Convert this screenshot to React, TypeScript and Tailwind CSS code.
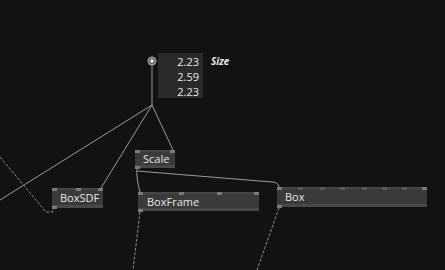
import React from "react";

type Port = { x: number; bright?: boolean };

function Node({
  left,
  top,
  width,
  height,
  label,
  ports,
  bottomPort = true,
  textPad = 8,
}: {
  left: number;
  top: number;
  width: number;
  height: number;
  label: string;
  ports: Port[];
  bottomPort?: boolean;
  textPad?: number;
}) {
  return (
    <div
      className="absolute flex flex-col bg-[#3a3a3a]"
      style={{ left, top, width, height }}
    >
      <div className="h-[2px] bg-[#454545]" />
      <div
        className="flex flex-1 items-center text-[11px] leading-none text-[#e6e6e6] [font-family:'Open_Sans',sans-serif]"
        style={{ paddingLeft: textPad }}
      >
        {label}
      </div>
      <div className="h-[3px] bg-[#484848]" />
      {ports.map((p, i) => (
        <div
          key={i}
          className={
            p.bright
              ? "absolute top-0 h-[3px] w-[5px] bg-[#7a7a7a]"
              : "absolute top-0 h-[3px] w-[5px] bg-[#5a5a5a]"
          }
          style={{ left: p.x }}
        />
      ))}
      {bottomPort && (
        <div className="absolute bottom-[-1px] left-0 h-[3px] w-[5px] bg-[#7a7a7a]" />
      )}
    </div>
  );
}

export default function App() {
  return (
    <div className="relative h-[270px] w-[445px] overflow-hidden bg-[#121212]">
      <svg
        className="absolute left-0 top-0"
        width={445}
        height={270}
        viewBox="0 0 445 270"
      >
        <g stroke="#9a9a9a" strokeWidth={1} fill="none">
          <line x1={152} y1={65} x2={152} y2={105} />
          <line x1={152} y1={105} x2={0} y2={200} />
          <line x1={152} y1={105} x2={101} y2={188} />
          <line x1={152} y1={105} x2={173} y2={150} />
          <path d="M137 168 Q136 178 140 192" />
          <path d="M137 171 L272 182 Q278 182 279 187" />
        </g>
        <g stroke="#8a8a8a" strokeWidth={1} fill="none" strokeDasharray="3 1.5">
          <path d="M0 157 L46 212 L53 212 L53 209" />
          <line x1={140} y1={212} x2={133} y2={270} />
          <line x1={279} y1={208} x2={257} y2={270} />
        </g>
        <circle cx={152} cy={61} r={4.5} fill="#9a9a9a" />
        <circle cx={152} cy={61} r={3} fill="#5a5a5a" />
        <circle cx={152} cy={61} r={1.7} fill="#ffffff" />
      </svg>

      <div className="absolute left-[158px] top-[53px] flex h-[45px] w-[45px] flex-col items-end justify-between bg-[#2a2a2a] py-[1px] pr-[4px] text-[11px] leading-[15px] text-[#e8e8e8] [font-family:'Open_Sans',sans-serif]">
        <span>2.23</span>
        <span>2.59</span>
        <span>2.23</span>
      </div>
      <div className="absolute left-[211px] top-[54px] text-[10px] font-bold italic leading-[14px] text-[#e8e8e8] [font-family:'Open_Sans',sans-serif]">
        Size
      </div>

      <Node
        left={135}
        top={150}
        width={40}
        height={18}
        label="Scale"
        ports={[{ x: 0, bright: true }, { x: 35, bright: true }]}
        textPad={8}
      />
      <Node
        left={52}
        top={188}
        width={51}
        height={20}
        label="BoxSDF"
        ports={[{ x: 0, bright: true }, { x: 24, bright: true }, { x: 46, bright: true }]}
        textPad={8}
      />
      <Node
        left={138}
        top={192}
        width={121}
        height={19}
        label="BoxFrame"
        ports={[
          { x: 0, bright: true },
          { x: 41, bright: true },
          { x: 79, bright: true },
          { x: 116, bright: true },
        ]}
        textPad={9}
      />
      <Node
        left={277}
        top={187}
        width={150}
        height={20}
        label="Box"
        ports={[
          { x: 0, bright: true },
          { x: 21 },
          { x: 43 },
          { x: 63 },
          { x: 85 },
          { x: 105 },
          { x: 125 },
          { x: 145, bright: true },
        ]}
        textPad={8}
      />
    </div>
  );
}
